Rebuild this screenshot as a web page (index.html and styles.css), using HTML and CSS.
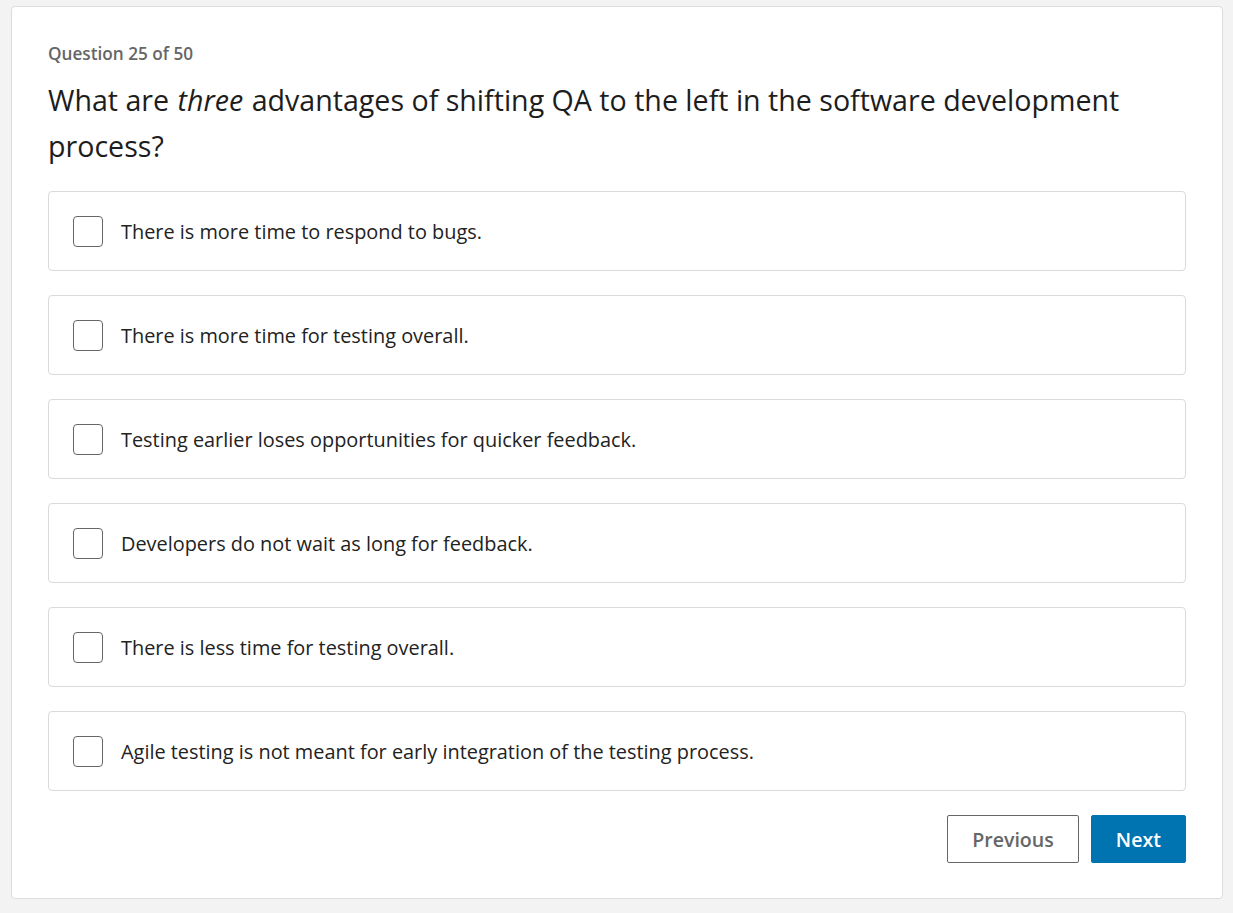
FILE: index.html
```html
<!DOCTYPE html>
<html lang="en">
<head>
<meta charset="utf-8">
<title>Quiz</title>
<link rel="stylesheet" href="styles.css">
</head>
<body>
<main class="card">
  <div class="counter">Question 25 of 50</div>
  <h1 class="question">What are <em>three</em> advantages of shifting QA to the left in the software development process?</h1>
  <ul class="options">
    <li class="option"><span class="box"></span><span class="label">There is more time to respond to bugs.</span></li>
    <li class="option"><span class="box"></span><span class="label">There is more time for testing overall.</span></li>
    <li class="option"><span class="box"></span><span class="label">Testing earlier loses opportunities for quicker feedback.</span></li>
    <li class="option"><span class="box"></span><span class="label">Developers do not wait as long for feedback.</span></li>
    <li class="option"><span class="box"></span><span class="label">There is less time for testing overall.</span></li>
    <li class="option"><span class="box"></span><span class="label">Agile testing is not meant for early integration of the testing process.</span></li>
  </ul>
  <div class="actions">
    <button class="btn btn-secondary">Previous</button>
    <button class="btn btn-primary">Next</button>
  </div>
</main>
</body>
</html>
```

FILE: styles.css
```css
* { box-sizing: border-box; }
html, body { margin: 0; padding: 0; }
body {
  background: #f3f3f3;
  font-family: "Open Sans", "Noto Sans", "Liberation Sans", sans-serif;
  color: #1f1f1f;
  padding: 6px 11px 0 11px;
}
.card {
  width: 1212px;
  background: #fff;
  border: 1px solid #dcdcdc;
  border-radius: 4px;
  padding: 35px 36px 35px 36px;
}
.counter {
  font-size: 17.2px;
  line-height: 24px;
  color: #666;
  font-weight: 600;
}
.question {
  margin: 11px 0 22px 0;
  font-size: 28.6px;
  line-height: 46px;
  font-weight: 400;
  color: #1d1d1d;
}
.question em {
  font-style: italic;
  display: inline-block;
  padding: 0 1px;
}
.options {
  list-style: none;
  margin: 0;
  padding: 0;
  display: flex;
  flex-direction: column;
  gap: 24px;
}
.option {
  height: 80px;
  border: 1px solid #dadada;
  border-radius: 4px;
  display: flex;
  align-items: center;
  padding: 0 24px;
  gap: 18px;
}
.box {
  width: 30px;
  height: 31px;
  flex: none;
  border: 1.5px solid #666;
  border-radius: 4px;
}
.label {
  font-size: 19.9px;
  color: #222;
  padding-top: 1px;
}
.actions {
  display: flex;
  justify-content: flex-end;
  gap: 12px;
  margin-top: 24px;
}
.btn {
  height: 48px;
  padding: 0 24px;
  font-family: inherit;
  font-size: 19.6px;
  font-weight: 600;
  border-radius: 2px;
  cursor: pointer;
}
.btn-secondary {
  background: #fff;
  border: 1px solid #666;
  color: #666;
}
.btn-primary {
  background: #0073b1;
  border: 1px solid #0073b1;
  color: #fff;
}
```
